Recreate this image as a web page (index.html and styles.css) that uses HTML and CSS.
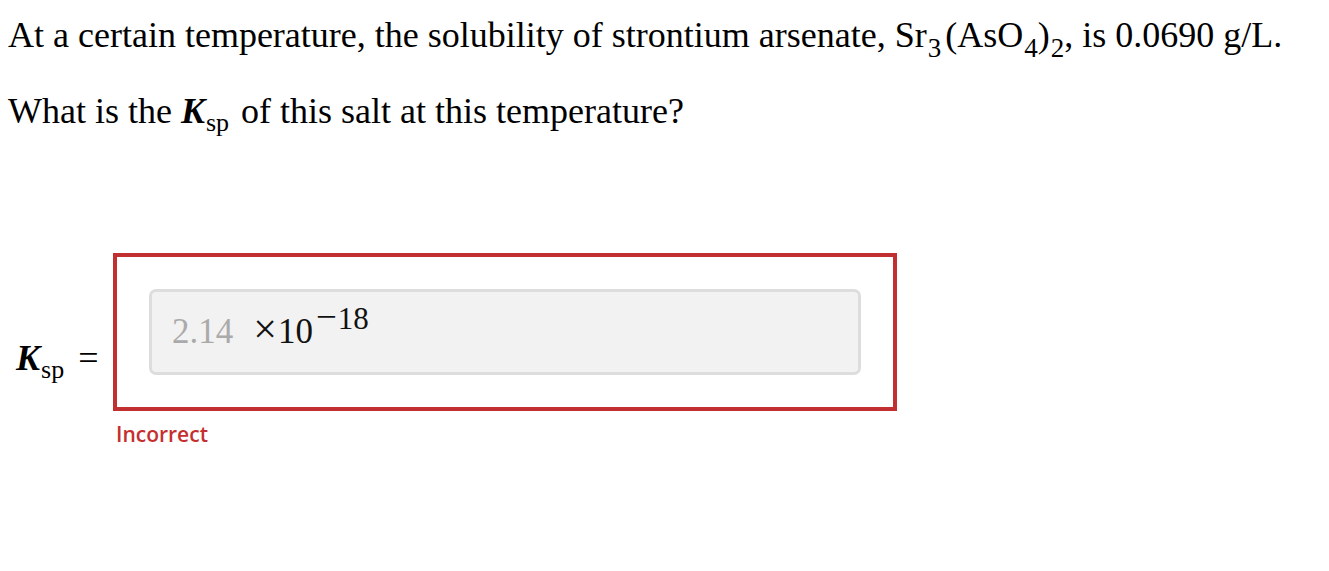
FILE: index.html
```html
<!DOCTYPE html>
<html>
<head>
<meta charset="utf-8">
<link rel="stylesheet" href="styles.css">
</head>
<body>
<p class="q q1">At a certain temperature, the solubility of strontium arsenate, <span class="chem">Sr<sub>3</sub></span><span class="chem paren">(AsO<sub>4</sub>)<sub>2</sub></span>, is 0.0690 g/L.</p>
<p class="q q2">What is the <i class="k">K</i><sub class="sp">sp</sub> of this salt at this temperature?</p>
<div class="answer-row">
  <div class="label"><i class="k">K</i><sub class="sp">sp</sub><span class="eq">=</span></div>
  <div class="answer-col">
    <div class="answer-box">
      <div class="input">
        <span class="val">2.14</span><span class="times"><span class="x">×</span>10</span><sup class="exp"><span class="minus">−</span>18</sup>
      </div>
    </div>
    <div class="feedback">Incorrect</div>
  </div>
</div>
</body>
</html>
```
FILE: styles.css
```css
html, body {
  margin: 0;
  padding: 0;
  background: #ffffff;
}
body {
  padding: 0 8px;
  font-family: "Liberation Serif", "Times New Roman", serif;
  color: #000;
}
.q {
  font-size: 36px;
  line-height: 40px;
  margin: 0;
  white-space: nowrap;
}
.q1 {
  margin-top: 15px;
}
.q2 {
  margin-top: 36px;
}
sub, sup {
  line-height: 0;
}
.chem sub {
  font-size: 27px;
  vertical-align: -10px;
  margin-left: 1px;
}
.paren {
  margin-left: 4px;
}
.k {
  font-weight: bold;
  font-style: italic;
}
.sp {
  font-size: 26px;
  vertical-align: -8px;
  margin-left: 1px;
  margin-right: 3px;
}
.answer-row {
  display: flex;
  align-items: flex-start;
  margin-top: 122px;
}
.label {
  font-size: 36px;
  line-height: 40px;
  margin-top: 85px;
  width: 97px;
  padding-left: 8px;
  white-space: nowrap;
}
.label .sp {
  margin-right: 0;
}
.eq {
  margin-left: 14px;
}
.answer-col {
  display: flex;
  flex-direction: column;
}
.answer-box {
  width: 784px;
  box-sizing: border-box;
  border: 4px solid #c22f30;
  padding: 32px;
}
.input {
  box-sizing: border-box;
  height: 86px;
  border: 3px solid #dddddd;
  border-radius: 7px;
  background: #f2f2f2;
  padding: 21px 20px 0;
  font-size: 35px;
  line-height: 38px;
  white-space: nowrap;
}
.val {
  color: #aaaaaa;
  margin-right: 20px;
}
.times {
  color: #111;
}
.x {
  font-size: 42px;
  line-height: 0;
  margin-right: 1px;
}
.exp {
  font-size: 31px;
  vertical-align: 14px;
  color: #111;
  margin-left: 3px;
}
.minus {
  font-size: 37px;
  line-height: 0;
  margin-right: 1px;
}
.feedback {
  margin-top: 9px;
  font-family: "Open Sans", sans-serif;
  font-weight: 600;
  font-size: 21px;
  line-height: 28px;
  color: #c4302f;
  padding-left: 3px;
}
```
